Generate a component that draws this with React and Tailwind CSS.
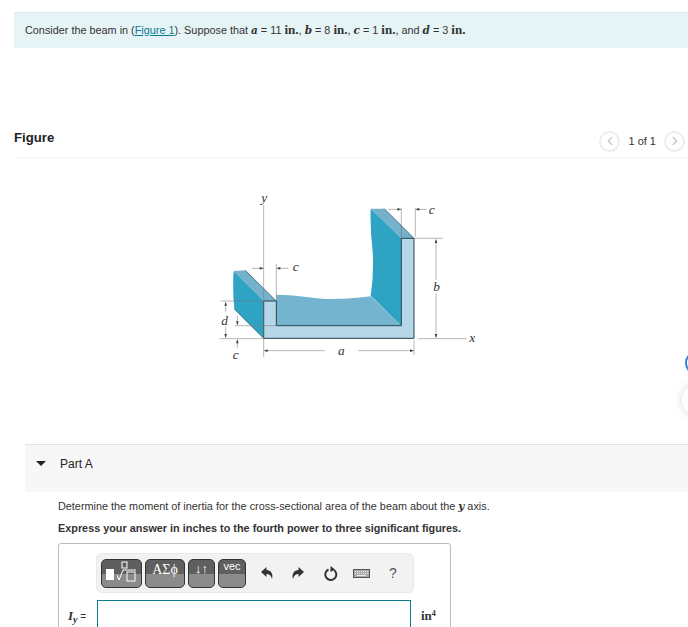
import React from "react";
import { ChevronLeft, ChevronRight } from "lucide-react";

const serif = "font-['Liberation_Serif','DejaVu_Serif',serif]";

function V({ children }) {
    return <span className="font-['DejaVu_Serif',serif] italic font-bold text-[10.5px]">{children}</span>;
}

function U({ children }) {
    return <span className={`${serif} font-bold text-[13px]`}>{children}</span>;
}

// beam drawing, coordinates are 3x the screenshot pixels
function BeamFigure() {
    const dim = { stroke: "#777", strokeWidth: 1.6, fill: "none" };
    const label = { fontFamily: "Liberation Serif", fontStyle: "italic", fontSize: 40, fill: "#333" };
    return (
        <svg width="290" height="185" viewBox="0 0 870 555" className="block">
            {/* floor of the channel */}
            <path d="M229 329 C300 329 350 343 400 342 C440 342 480 338 512 334 L604 422 L229 422 Z" fill="#74b4cf" />
            {/* left flange inner and top */}
            <path d="M101 258 L136 256 L229 348 L191 348 Z" fill="#74b2cb" />
            <path d="M101 258 L191 348 L191 460 L103 372 Q97 310 101 258 Z" fill="#2ea3c4" />
            {/* right flange */}
            <path d="M512 71 L553 71 L642 160 L604 160 Z" fill="#74b2cb" />
            <path d="M512 71 L604 160 L604 422 L512 332 Q522 270 518 200 Q510 130 512 71 Z" fill="#2ea3c4" />
            {/* front face */}
            <path d="M191 348 L229 348 L229 422 L604 422 L604 160 L642 160 L642 460 L191 460 Z" fill="#b5d6e7" stroke="#24424f" strokeWidth="3" />
            <path d="M136 256 L229 348 M553 71 L642 160 M103 372 L191 460" stroke="#2a4a58" strokeWidth="2" fill="none" />
            {/* dimension lines */}
            <path d="M191 60 V515 M229 236 V348 M604 70 V160 M646 70 V155 M642 465 V510" {...dim} />
            <path d="M62 348 H191 M58 461 H191 M105 422 H229 M642 160 H728 M655 461 H800" {...dim} />
            <path d="M155 250 H191 M232 250 H265 M565 73 H604 M649 73 H680 M195 497 H375 M475 497 H640" {...dim} />
            <path d="M77 352 V380 M77 425 V458 M112 392 V420 M112 464 V490 M708 164 V285 M708 325 V458" {...dim} />
            <path d="M191 250 l-12 -4 v8 Z M229 250 l12 -4 v8 Z M604 73 l-12 -4 v8 Z M646 73 l12 -4 v8 Z M191 497 l12 -4 v8 Z M642 497 l-12 -4 v8 Z M77 350 l-4 12 h8 Z M77 459 l-4 -12 h8 Z M112 421 l-4 -12 h8 Z M112 463 l-4 12 h8 Z M708 162 l-4 12 h8 Z M708 459 l-4 -12 h8 Z" fill="#444" />
            <text x="184" y="52" {...label}>y</text>
            <text x="278" y="259" {...label}>c</text>
            <text x="686" y="86" {...label}>c</text>
            <text x="64" y="420" {...label}>d</text>
            <text x="700" y="318" {...label}>b</text>
            <text x="98" y="523" {...label}>c</text>
            <text x="414" y="511" {...label}>a</text>
            <text x="808" y="470" {...label}>x</text>
        </svg>
    );
}

function ToolButton({ className, children }) {
    return (
        <div className={`h-[29px] rounded-[5px] border border-[#333] bg-[linear-gradient(#5f5f5f_0%,#5f5f5f_52%,#8b8b8b_52%,#8b8b8b_100%)] text-white flex items-start justify-center ${className}`}>
            {children}
        </div>
    );
}

function UndoIcon({ flip }) {
    return (
        <svg width="14" height="14" viewBox="0 0 14 14" className={flip ? "-scale-x-100" : ""}>
            <path d="M1 6 L6.5 1 V4 C11 4 13.5 8 12 13 C11 9.5 9.5 8 6.5 8 V11 Z" fill="#333" />
        </svg>
    );
}

export default function App() {
    return (
        <div className="relative w-[688px] h-[627px] overflow-hidden bg-white pt-3 font-['Liberation_Sans',Arial,sans-serif] text-[#333]">
            {/* Intro */}
            <div className="ml-[14px] h-9 bg-[#e6f4f6] border-t border-[#dde8ea] flex items-center pl-[11px] pb-[2px] text-[10.85px]">
                <span className="whitespace-pre">
                    Consider the beam in (<span className="text-[#0a7a96] underline">Figure 1</span>). Suppose that <V>a</V> = 11 <U>in.</U>, <V>b</V> = 8 <U>in.</U>, <V>c</V> = 1 <U>in.</U>, and <V>d</V> = 3 <U>in.</U>
                </span>
            </div>

            {/* Figure header */}
            <div className="mt-[80px] ml-[14px] h-[20px] flex items-center justify-between pr-[3px]">
                <h2 className="text-[13.2px] font-bold text-[#222]">Figure</h2>
                <div className="flex items-center gap-[8px] text-[11px] mt-[6px]">
                    <div className="w-[21px] h-[21px] rounded-full border-2 border-[#eeeeee] flex items-center justify-center text-[#c8c8c8]">
                        <ChevronLeft size={14} strokeWidth={2.5} />
                    </div>
                    <span>1 of 1</span>
                    <div className="w-[21px] h-[21px] rounded-full border-2 border-[#eeeeee] flex items-center justify-center text-[#c8c8c8]">
                        <ChevronRight size={14} strokeWidth={2.5} />
                    </div>
                </div>
            </div>
            <div className="ml-[14px] mt-[9px] border-t border-[#f4f4f4]" />

            {/* Figure */}
            <div className="mt-[27px] ml-[200px]">
                <BeamFigure />
            </div>

            {/* Part A */}
            <div className="mt-[74px] ml-[25px] h-[48px] bg-[#f7f7f7] border-t border-[#e2e2e2] flex items-start pt-[10px]">
                <div className="ml-[11px] mt-[6px] w-0 h-0 border-x-[5px] border-x-transparent border-t-[5px] border-t-[#222]" />
                <span className="ml-[14px] text-[12px] text-[#222]">Part A</span>
            </div>
            <div className="ml-[58px]">
                <p className="mt-[7px] h-[14px] leading-[14px] text-[10.85px] whitespace-nowrap">
                    Determine the moment of inertia for the cross-sectional area of the beam about the <V>y</V> axis.
                </p>
                <p className="mt-[8px] h-[14px] leading-[14px] text-[10.85px] font-bold whitespace-nowrap">
                    Express your answer in inches to the fourth power to three significant figures.
                </p>

                {/* Answer box */}
                <div className="mt-[8px] w-[393px] h-[100px] border border-[#bdbdbd] rounded-t-[3px] pt-[9px]">
                    <div className="ml-[37px] w-[318px] h-[40px] bg-[#f2f2f2] rounded-[6px] border border-[#e8e8e8] flex items-center pl-[4px]">
                        <ToolButton className="w-[41px] gap-[3px] pt-[1px]">
                            <div className="w-[8px] h-[11px] bg-white mt-[8px]" />
                            <svg width="20" height="22" viewBox="0 0 20 22" fill="none" stroke="#fff" strokeWidth="1">
                                <rect x="5" y="1" width="5" height="6" />
                                <path d="M0 14 L2 19 L6 9 H19" />
                                <rect x="10" y="11" width="8" height="9" />
                            </svg>
                        </ToolButton>
                        <ToolButton className={`ml-[3px] w-[40px] text-[14px] leading-[20px] ${serif}`}>ΑΣϕ</ToolButton>
                        <ToolButton className="ml-[3px] w-[27px] text-[13px] leading-[18px] font-light text-[#ddd]">↓↑</ToolButton>
                        <ToolButton className="ml-[3px] w-[28px] text-[11px] leading-[13px]">vec</ToolButton>
                        <div className="ml-[14px] w-[14px] flex justify-center"><UndoIcon /></div>
                        <div className="ml-[17px] w-[14px] flex justify-center"><UndoIcon flip /></div>
                        <svg className="ml-[19px]" width="14" height="15" viewBox="0 0 14 15" fill="none">
                            <path d="M4.5 3.5 A5.5 5.5 0 1 0 10 4" stroke="#333" strokeWidth="2" />
                            <path d="M6.5 0 L11 3.5 L6.5 6 Z" fill="#333" />
                        </svg>
                        <svg className="ml-[15px]" width="17" height="9" viewBox="0 0 17 9">
                            <rect x="0.5" y="0.5" width="16" height="8" fill="#aaa" stroke="#555" />
                            <path d="M2 2.5 H15 M2 4.5 H15" stroke="#eee" strokeDasharray="1 1" />
                            <path d="M4 6.5 H13" stroke="#eee" />
                        </svg>
                        <span className="ml-[19px] text-[14px] text-[#555]">?</span>
                    </div>
                    <div className="mt-[7px] flex items-start">
                        <div className={`w-[38px] pl-[9px] pt-[6px] text-[13px] whitespace-nowrap ${serif}`}>
                            <span className="italic font-bold">I</span>
                            <sub className="italic font-bold text-[10px]">y</sub>
                            <span className="font-['Liberation_Sans'] text-[10px]"> =</span>
                        </div>
                        <div className="w-[314px] h-[40px] border border-[#0e7c8f] shrink-0" />
                        <div className={`ml-[10px] pt-[6px] text-[13px] font-bold whitespace-nowrap ${serif}`}>
                            in<sup className="text-[8px]">4</sup>
                        </div>
                    </div>
                </div>
            </div>

            {/* Floating widgets cut off at the right edge */}
            <div className="absolute left-[685px] top-[351px] w-[24px] h-[24px] rounded-full border-2 border-[#2f80d8] bg-white" />
            <div className="absolute left-[682px] top-[384px] w-[32px] h-[32px] rounded-full bg-white shadow-[0_0_8px_rgba(0,0,0,0.15)]" />
        </div>
    );
}
